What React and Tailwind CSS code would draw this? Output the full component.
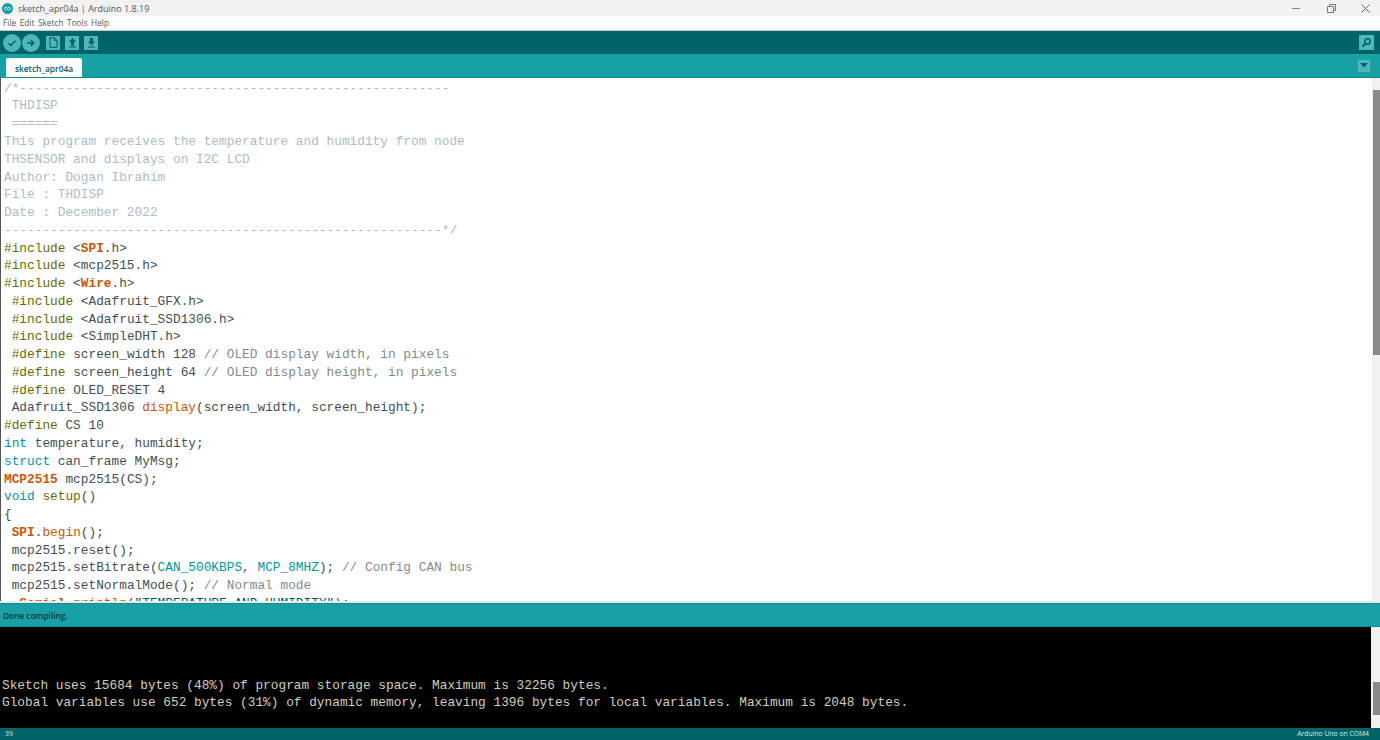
const K = ({ children }) => <span className="text-[#5e6d03]">{children}</span>;
const B = ({ children }) => <span className="font-bold text-[#d35400]">{children}</span>;
const O = ({ children }) => <span className="text-[#d35400]">{children}</span>;
const T = ({ children }) => <span className="text-[#00979c]">{children}</span>;
const C = ({ children }) => <span className="text-[#aebcc2]">{children}</span>;
const L = ({ children }) => <span className="text-[#7f8c8d]">{children}</span>;

const dashes = (n) => "-".repeat(n);

const lines = [
  <C>{"/*" + dashes(56)}</C>,
  <C>{" THDISP"}</C>,
  <C>{" ======"}</C>,
  <C>This program receives the temperature and humidity from node</C>,
  <C>THSENSOR and displays on I2C LCD</C>,
  <C>Author: Dogan Ibrahim</C>,
  <C>File : THDISP</C>,
  <C>Date : December 2022</C>,
  <C>{dashes(57) + "*/"}</C>,
  <><K>#include</K> &lt;<B>SPI</B>.h&gt;</>,
  <><K>#include</K> &lt;mcp2515.h&gt;</>,
  <><K>#include</K> &lt;<B>Wire</B>.h&gt;</>,
  <>{" "}<K>#include</K> &lt;Adafruit_GFX.h&gt;</>,
  <>{" "}<K>#include</K> &lt;Adafruit_SSD1306.h&gt;</>,
  <>{" "}<K>#include</K> &lt;SimpleDHT.h&gt;</>,
  <>{" "}<K>#define</K> screen_width 128 <L>// OLED display width, in pixels</L></>,
  <>{" "}<K>#define</K> screen_height 64 <L>// OLED display height, in pixels</L></>,
  <>{" "}<K>#define</K> OLED_RESET 4</>,
  <>{" "}Adafruit_SSD1306 <O>display</O>(screen_width, screen_height);</>,
  <><K>#define</K> CS 10</>,
  <><T>int</T> temperature, humidity;</>,
  <><T>struct</T> can_frame MyMsg;</>,
  <><B>MCP2515</B> mcp2515(CS);</>,
  <><T>void</T> <K>setup</K>()</>,
  <>{"{"}</>,
  <>{" "}<B>SPI</B>.<O>begin</O>();</>,
  <>{" "}mcp2515.reset();</>,
  <>{" "}mcp2515.setBitrate(<T>CAN_500KBPS</T>, <T>MCP_8MHZ</T>); <L>// Config CAN bus</L></>,
  <>{" "}mcp2515.setNormalMode(); <L>// Normal mode</L></>,
  <>{"  "}<B>Serial</B>.<O>println</O>(<span className="text-[#005c5f]">"TEMPERATURE AND HUMIDITY"</span>);</>,
];

function RoundBtn({ children }) {
  return (
    <div className="w-[18px] h-[18px] rounded-full bg-[#4db7bb] flex items-center justify-center text-[#005c5f]">
      {children}
    </div>
  );
}

function SquareBtn({ children }) {
  return (
    <div className="w-[14px] h-[14px] bg-[#4db7bb] flex items-center justify-center text-[#005c5f]">
      {children}
    </div>
  );
}

export default function App() {
  return (
    <div className="w-[1380px] h-[740px] flex flex-col overflow-hidden bg-white font-['Open_Sans','Liberation_Sans',sans-serif]">
      {/* Title bar */}
      <div className="h-[16px] shrink-0 bg-[#f2f2f2] flex items-center pl-[2px] text-[#555] text-[9px] leading-none">
        <svg width="11" height="11" viewBox="0 0 22 22" className="mr-[5px]">
          <circle cx="11" cy="11" r="11" fill="#17a1a5" />
          <path d="M9.500 11c-1-2-2-2.600-3.200-2.600a2.600 2.600 0 0 0 0 5.200c1.200 0 2.200-.6 3.200-2.600 1-2 2-2.600 3.200-2.600a2.600 2.600 0 0 1 0 5.200c-1.200 0-2.200-.6-3.200-2.600Z" fill="none" stroke="#fff" strokeWidth="1.500" transform="translate(1.500 0)" />
        </svg>
        <span>sketch_apr04a | Arduino 1.8.19</span>
        <div className="ml-auto flex items-center text-[#666]">
          <svg width="9" height="9" viewBox="0 0 9 9" className="mr-[26px]"><path d="M0 4.500h8" stroke="#888" strokeWidth="1" /></svg>
          <svg width="9" height="9" viewBox="0 0 9 9" className="mr-[25px]"><path d="M.5 2.500h6v6h-6zM2.500 2.500v-2h6v6h-2" fill="none" stroke="#777" strokeWidth="1" /></svg>
          <svg width="9" height="9" viewBox="0 0 9 9" className="mr-[10px]"><path d="M.5.5l8 8M8.500.5l-8 8" stroke="#666" strokeWidth="1" /></svg>
        </div>
      </div>
      {/* Menu bar */}
      <div className="h-[14px] shrink-0 bg-white flex items-center gap-[3.500px] pl-[3px] pt-[1px] text-[#555] text-[8.300px] leading-none">
        <span>File</span>
        <span>Edit</span>
        <span>Sketch</span>
        <span>Tools</span>
        <span>Help</span>
      </div>
      {/* Toolbar */}
      <div className="h-[24px] shrink-0 border-t border-[#c9c9c9] bg-[#006468] flex items-center pl-[3px] pr-[6px]">
        <div className="flex items-center gap-[1px]">
          <RoundBtn>
            <svg width="10" height="10" viewBox="0 0 10 10"><path d="M1.500 5.200 4 7.600 8.500 2.600" fill="none" stroke="currentColor" strokeWidth="1.400" /></svg>
          </RoundBtn>
          <RoundBtn>
            <svg width="10" height="10" viewBox="0 0 10 10"><path d="M1.500 5h6M5 2.200 7.800 5 5 7.800" fill="none" stroke="currentColor" strokeWidth="1.400" /></svg>
          </RoundBtn>
        </div>
        <div className="flex items-center gap-[5px] ml-[6px]">
          <SquareBtn>
            <svg width="9" height="11" viewBox="0 0 9 11"><path d="M1 .8h4.500L8 3.300v7H1zM5.500.8v2.500H8" fill="none" stroke="currentColor" strokeWidth="1" /></svg>
          </SquareBtn>
          <SquareBtn>
            <svg width="11" height="11" viewBox="0 0 11 11"><path d="M5.500 1 9 5H7v3.500H4V5H2z" fill="currentColor" /><path d="M2 10h7" stroke="currentColor" /></svg>
          </SquareBtn>
          <SquareBtn>
            <svg width="11" height="11" viewBox="0 0 11 11"><path d="M5.500 8.500 9 4.500H7V1H4v3.500H2z" fill="currentColor" /><path d="M2 10h7" stroke="currentColor" /></svg>
          </SquareBtn>
        </div>
        <div className="ml-auto w-[15px] h-[15px] bg-[#4db7bb] flex items-center justify-center text-[#005c5f]">
          <svg width="11" height="11" viewBox="0 0 11 11"><circle cx="6.500" cy="4.500" r="2.700" fill="none" stroke="currentColor" strokeWidth="1.400" /><path d="M4.500 6.500 1.500 9.500" stroke="currentColor" strokeWidth="1.800" /></svg>
        </div>
      </div>
      {/* Tab bar */}
      <div className="h-[23px] shrink-0 bg-[#17a1a5] flex items-end pl-[6px] pr-[10px]">
        <div className="w-[76px] h-[19px] bg-white rounded-t-[2px] flex items-center justify-center pt-[3px] text-[#005c5f] text-[8.400px] font-semibold leading-none">
          sketch_apr04a
        </div>
        <div className="ml-auto self-center w-[12px] h-[12px] bg-[#4db7bb] flex items-center justify-center">
          <svg width="8" height="5" viewBox="0 0 8 5"><path d="M0 0h8L4 4.500z" fill="#005c5f" /></svg>
        </div>
      </div>
      {/* Editor */}
      <div className="h-[526px] shrink-0 flex border-t border-[#0b8a8e] border-b-2 border-b-[#e9e9e9] overflow-hidden">
        <div className="flex-1 border-l border-[#555] pl-[3px] pt-[1.700px] overflow-hidden font-['Liberation_Mono',monospace] text-[12.800px] leading-[17.780px] text-[#434f54] whitespace-pre">
          {lines.map((line, i) => (
            <div key={i} className="h-[17.780px]">{line}</div>
          ))}
        </div>
        <div className="w-[8px] shrink-0 bg-[#f0f0f0] pt-[12px]">
          <div className="h-[265px] bg-[#8a8a8a] ml-[1px]" />
        </div>
      </div>
      {/* Status */}
      <div className="h-[24px] shrink-0 bg-[#17a1a5] border-t border-[#0e8f93] border-b border-b-[#0e8f93] flex items-center pl-[3px] pt-[2px] text-[#00393c] text-[8.300px] font-semibold leading-none">
        Done compiling.
      </div>
      {/* Console */}
      <div className="h-[101px] shrink-0 flex overflow-hidden">
        <div className="flex-1 bg-black pt-[49.500px] pl-[2px] font-['Liberation_Mono',monospace] text-[12.800px] leading-[17.780px] text-[#d4cfbb] whitespace-pre">
          <div>Sketch uses 15684 bytes (48%) of program storage space. Maximum is 32256 bytes.</div>
          <div>Global variables use 652 bytes (31%) of dynamic memory, leaving 1396 bytes for local variables. Maximum is 2048 bytes.</div>
        </div>
        <div className="w-[9px] shrink-0 bg-[#f0f0f0] pt-[55px]">
          <div className="h-[33px] bg-[#8a8a8a] ml-[2px]" />
        </div>
      </div>
      {/* Footer */}
      <div className="h-[12px] shrink-0 bg-[#006468] flex items-center justify-between pl-[5px] pr-[11px] text-[#d5eeee] text-[6.800px] leading-none">
        <span>39</span>
        <span>Arduino Uno on COM4</span>
      </div>
    </div>
  );
}
